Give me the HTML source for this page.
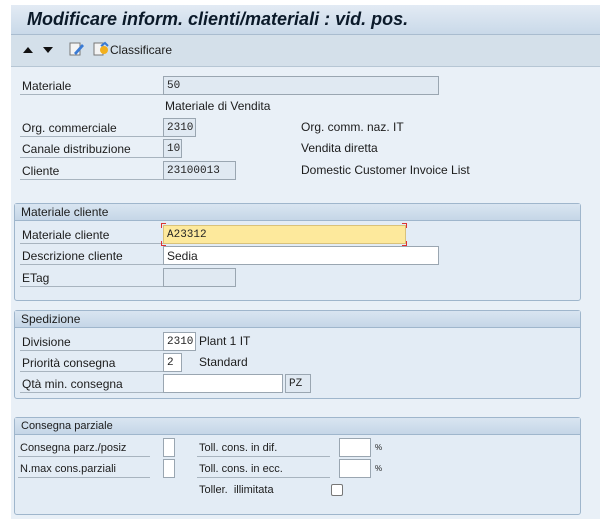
<!DOCTYPE html>
<html><head><style>
*{margin:0;padding:0;box-sizing:border-box}
body{width:600px;height:519px;background:#fff;position:relative;overflow:hidden;font-family:"Liberation Sans",sans-serif;font-size:12px;color:#1c1c1c}
.a{position:absolute}
#title{left:11px;top:5px;width:589px;height:30px;background:linear-gradient(#e3ebf4,#c9d9e9);border-bottom:1px solid #a9bccf}
#title span{position:absolute;left:16px;top:4px;font-size:18px;font-weight:bold;font-style:italic;color:#0b1a2a}
#tb{left:11px;top:35px;width:589px;height:32px;background:#d4e0ea;border-bottom:1px solid #b6c6d4}
#main{left:11px;top:67px;width:589px;height:452px;background:#e9f0f7}
.lb{position:absolute;height:19px;line-height:21px;padding-left:2px;border-bottom:1px solid #a8b4bf}
.f{position:absolute;height:19px;border:1px solid #9aa6b1;background:#fff;font-family:"Liberation Mono",monospace;font-size:11px;line-height:18px;padding-left:3px;color:#222}
.ro{background:#e0e9f2}
.t{position:absolute;line-height:19px}
.g{position:absolute;left:14px;width:567px;border:1px solid #9fb6cc;border-radius:3px;background:#e3ecf5}
.gh{height:17px;background:linear-gradient(#d9e5f1,#c5d6e7);border-bottom:1px solid #9fb6cc;padding-left:6px;line-height:17px}
.s{font-size:11px}
</style></head><body>
<div id="title" class="a"><span>Modificare inform. clienti/materiali : vid. pos.</span></div>
<div id="tb" class="a">
<svg class="a" style="left:12px;top:10px" width="40" height="10"><path d="M0 8 L5 2 L10 8Z" fill="#111"/><path d="M20 2 L30 2 L25 8Z" fill="#111"/></svg>
<svg class="a" style="left:58px;top:6px" width="16" height="16"><rect x="1" y="2" width="10" height="12" fill="#f4f4f4" stroke="#777"/><path d="M5 12 L13 3 L15 5 L7 14 Z" fill="#3a7bd5"/></svg>
<svg class="a" style="left:82px;top:6px" width="16" height="16"><rect x="1" y="2" width="9" height="12" fill="#f4f4f4" stroke="#777"/><circle cx="11" cy="9" r="4" fill="#f2b01e"/><path d="M8 5 L12 2 L15 5" stroke="#3a7bd5" stroke-width="2" fill="none"/></svg>
<span class="a" style="left:99px;top:8px;font-size:12px">Classificare</span>
</div>
<div id="main" class="a"></div>

<div class="lb" style="left:20px;top:76px;width:143px">Materiale</div>
<div class="f ro" style="left:163px;top:76px;width:276px">50</div>
<div class="t" style="left:165px;top:97px">Materiale di Vendita</div>
<div class="lb" style="left:20px;top:118px;width:143px">Org. commerciale</div>
<div class="f ro" style="left:163px;top:118px;width:33px">2310</div>
<div class="t" style="left:301px;top:118px">Org. comm. naz. IT</div>
<div class="lb" style="left:20px;top:139px;width:143px">Canale distribuzione</div>
<div class="f ro" style="left:163px;top:139px;width:19px">10</div>
<div class="t" style="left:301px;top:139px">Vendita diretta</div>
<div class="lb" style="left:20px;top:161px;width:143px">Cliente</div>
<div class="f ro" style="left:163px;top:161px;width:73px">23100013</div>
<div class="t" style="left:301px;top:161px">Domestic Customer Invoice List</div>

<div class="g" style="top:203px;height:98px"><div class="gh">Materiale cliente</div></div>
<div class="lb" style="left:20px;top:225px;width:143px">Materiale cliente</div>
<div class="f" style="left:163px;top:225px;width:243px;background:#fde99c;border-color:#d9c27a">A23312</div>
<div class="a" style="left:161px;top:223px;width:5px;height:5px;border-left:1px solid #d33;border-top:1px solid #d33"></div>
<div class="a" style="left:402px;top:223px;width:5px;height:5px;border-right:1px solid #d33;border-top:1px solid #d33"></div>
<div class="a" style="left:161px;top:241px;width:5px;height:5px;border-left:1px solid #d33;border-bottom:1px solid #d33"></div>
<div class="a" style="left:402px;top:241px;width:5px;height:5px;border-right:1px solid #d33;border-bottom:1px solid #d33"></div>
<div class="lb" style="left:20px;top:246px;width:143px">Descrizione cliente</div>
<div class="f" style="left:163px;top:246px;width:276px;font-family:'Liberation Sans',sans-serif;font-size:12px">Sedia</div>
<div class="lb" style="left:20px;top:268px;width:143px">ETag</div>
<div class="f ro" style="left:163px;top:268px;width:73px"></div>

<div class="g" style="top:310px;height:89px"><div class="gh">Spedizione</div></div>
<div class="lb" style="left:20px;top:332px;width:143px">Divisione</div>
<div class="f" style="left:163px;top:332px;width:33px">2310</div>
<div class="t" style="left:199px;top:332px">Plant 1 IT</div>
<div class="lb" style="left:20px;top:353px;width:143px">Priorità consegna</div>
<div class="f" style="left:163px;top:353px;width:19px">2</div>
<div class="t" style="left:199px;top:353px">Standard</div>
<div class="lb" style="left:20px;top:374px;width:143px">Qtà min. consegna</div>
<div class="f" style="left:163px;top:374px;width:120px"></div>
<div class="f ro" style="left:285px;top:374px;width:26px">PZ</div>

<div class="g" style="top:417px;height:98px"><div class="gh s">Consegna parziale</div></div>
<div class="lb s" style="left:18px;top:438px;width:132px">Consegna parz./posiz</div>
<div class="f" style="left:163px;top:438px;width:12px"></div>
<div class="lb s" style="left:197px;top:438px;width:133px">Toll. cons. in dif.</div>
<div class="f" style="left:339px;top:438px;width:32px"></div>
<div class="t" style="left:375px;top:438px;font-size:8px">%</div>
<div class="lb s" style="left:18px;top:459px;width:132px">N.max cons.parziali</div>
<div class="f" style="left:163px;top:459px;width:12px"></div>
<div class="lb s" style="left:197px;top:459px;width:133px">Toll. cons. in ecc.</div>
<div class="f" style="left:339px;top:459px;width:32px"></div>
<div class="t" style="left:375px;top:459px;font-size:8px">%</div>
<div class="t s" style="left:199px;top:481px">Toller.&nbsp; illimitata</div>
<div class="a" style="left:331px;top:484px;width:12px;height:12px;border:1px solid #777;border-radius:2px;background:#fff"></div>
</body></html>
